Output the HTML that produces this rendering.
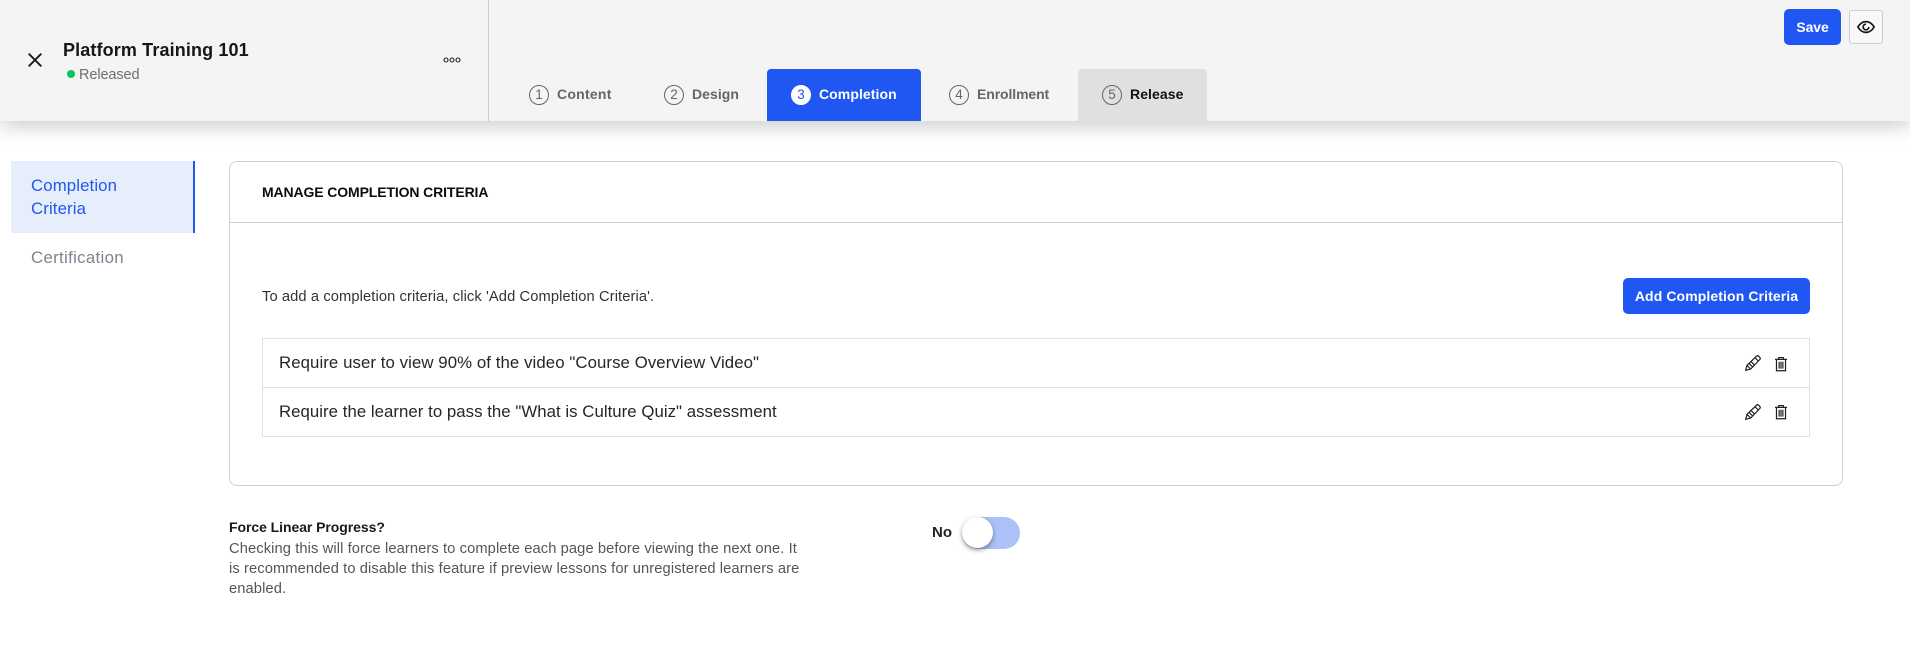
<!DOCTYPE html>
<html><head><meta charset="utf-8">
<style>
html,body{margin:0;padding:0;background:#fff}
body{width:1910px;height:656px;position:relative;overflow:hidden;font-family:"Liberation Sans",sans-serif;color:#222}
.a{position:absolute;white-space:nowrap;line-height:20px}
.b{font-weight:700}
.box{position:absolute;box-sizing:border-box}
svg{position:absolute;overflow:visible}
.tab{font-size:14px;font-weight:700;color:#666;top:84px}
.num{position:absolute;width:20px;height:20px;box-sizing:border-box;border:1.7px solid #666;border-radius:50%;top:85px;font-size:13.5px;line-height:17px;text-align:center;color:#666}
</style></head><body>
<div class="box" style="left:0;top:0;width:1910px;height:121px;background:#f4f4f4;box-shadow:0 4px 20px rgba(0,0,0,.22)"></div>
<div class="box" style="left:488px;top:0;width:1px;height:121px;background:#ccc"></div>
<svg style="left:28px;top:53px" width="14" height="14" viewBox="0 0 14 14"><path d="M.7.7l12.6 12.6M13.3.7L.7 13.3" stroke="#1a1a1a" stroke-width="1.9" fill="none"/></svg>
<div class="a b" style="left:63px;top:40px;font-size:18px;color:#161616;letter-spacing:.13px">Platform Training 101</div>
<div class="box" style="left:67px;top:70px;width:8px;height:8px;border-radius:50%;background:#0fc35c"></div>
<div class="a" style="left:79px;top:65px;font-size:14.5px;color:#6f6f6f;letter-spacing:-.1px">Released</div>
<svg style="left:443px;top:57px" width="18" height="6" viewBox="0 0 18 6" fill="none" stroke="#222" stroke-width="1.1"><circle cx="3" cy="3" r="2"/><circle cx="9" cy="3" r="2"/><circle cx="15" cy="3" r="2"/></svg>

<div class="box" style="left:767px;top:69px;width:154px;height:52px;background:#2057f3;border-radius:4px 4px 0 0"></div>
<div class="box" style="left:1078px;top:69px;width:129px;height:52px;background:#e0e0e0;border-radius:4px 4px 0 0"></div>
<div class="num" style="left:529px">1</div><div class="a tab" style="left:557px;letter-spacing:.25px">Content</div>
<div class="num" style="left:664px">2</div><div class="a tab" style="left:692px;letter-spacing:.05px">Design</div>
<div class="num" style="left:791px;background:#fff;border-color:#fff;color:#2057f3">3</div><div class="a tab" style="left:819px;color:#fff;letter-spacing:.07px">Completion</div>
<div class="num" style="left:949px">4</div><div class="a tab" style="left:977px;letter-spacing:-.1px">Enrollment</div>
<div class="num" style="left:1102px">5</div><div class="a tab" style="left:1130px;color:#111;letter-spacing:.08px">Release</div>

<div class="box" style="left:1784px;top:9px;width:57px;height:36px;background:#2057f3;border-radius:5px"></div>
<div class="a b" style="left:1784px;top:17px;width:57px;text-align:center;font-size:14px;color:#fff;letter-spacing:-.1px">Save</div>
<div class="box" style="left:1849px;top:10px;width:34px;height:34px;background:#f8f8f8;border:1px solid #ccc;border-radius:3px"></div>
<svg style="left:1857px;top:18px" width="18" height="18" viewBox="0 0 18 18" fill="none" stroke="#161616" stroke-width="1.7"><path d="M.9 9C3 5.4 5.8 3.6 9 3.6S15 5.4 17.1 9C15 12.6 12.200 14.400 9 14.400S3 12.600.9 9z"/><path d="M11.800 9A2.800 2.800 0 1 1 9 6.200" /></svg>

<div class="box" style="left:11px;top:161px;width:184px;height:72px;background:#e7eefb;border-right:2px solid #2057f3"></div>
<div class="a" style="left:31px;top:174px;font-size:16.8px;line-height:23px;color:#2057f3;letter-spacing:.12px;white-space:normal;width:130px">Completion<br>Criteria</div>
<div class="a" style="left:31px;top:248px;font-size:16.8px;color:#7b8590;letter-spacing:.33px">Certification</div>

<div class="box" style="left:229px;top:161px;width:1614px;height:325px;border:1px solid #cdd1d9;border-radius:8px"></div>
<div class="box" style="left:229px;top:222px;width:1614px;height:1px;background:#cdd1d9"></div>
<div class="a b" style="left:262px;top:182px;font-size:14px;color:#0c0c0c;letter-spacing:-.12px">MANAGE COMPLETION CRITERIA</div>
<div class="a" style="left:262px;top:287px;font-size:14.7px;color:#333;letter-spacing:.1px">To add a completion criteria, click 'Add Completion Criteria'.</div>
<div class="box" style="left:1623px;top:278px;width:187px;height:36px;background:#2057f3;border-radius:5px"></div>
<div class="a b" style="left:1623px;top:286px;width:187px;text-align:center;font-size:14px;color:#fff;letter-spacing:.1px">Add Completion Criteria</div>

<div class="box" style="left:262px;top:338px;width:1548px;height:99px;border:1px solid #e2e2e2"></div>
<div class="box" style="left:262px;top:387px;width:1548px;height:1px;background:#e2e2e2"></div>
<div class="a" style="left:279px;top:353px;font-size:16.8px;color:#262626;letter-spacing:.08px">Require user to view 90% of the video "Course Overview Video"</div>
<div class="a" style="left:279px;top:402px;font-size:16.8px;color:#262626;letter-spacing:.04px">Require the learner to pass the "What is Culture Quiz" assessment</div>

<svg style="left:1745px;top:355px" width="16" height="16" viewBox="0 0 16 16" fill="none" stroke="#1c1f25" stroke-width="1.200"><path d="M.7 15.300l1.300-5L11.500 1.200a1.500 1.500 0 0 1 2.100 0l1.200 1.200a1.500 1.500 0 0 1 0 2.100L5.700 14zM2 10.300L5.700 14M4 8.300l3.700 3.700M6 6.500l3.700 3.700M10 2.700l3.300 3.300"/></svg>
<svg style="left:1775px;top:356px" width="12" height="16" viewBox="0 0 13 16" fill="none" stroke="#1c1f25" stroke-width="1.300"><path d="M0 3h13M4 3V1h5v2M1.600 3v12.300h9.800V3M4.500 5.500v7.500M6.500 5.500v7.500M8.500 5.500v7.500"/></svg>
<svg style="left:1745px;top:404px" width="16" height="16" viewBox="0 0 16 16" fill="none" stroke="#1c1f25" stroke-width="1.200"><path d="M.7 15.300l1.300-5L11.500 1.200a1.500 1.500 0 0 1 2.100 0l1.200 1.200a1.500 1.500 0 0 1 0 2.100L5.700 14zM2 10.300L5.700 14M4 8.300l3.700 3.700M6 6.500l3.700 3.700M10 2.700l3.300 3.300"/></svg>
<svg style="left:1775px;top:404px" width="12" height="16" viewBox="0 0 13 16" fill="none" stroke="#1c1f25" stroke-width="1.300"><path d="M0 3h13M4 3V1h5v2M1.600 3v12.300h9.800V3M4.500 5.500v7.500M6.500 5.500v7.500M8.500 5.500v7.500"/></svg>

<div class="a b" style="left:229px;top:517px;font-size:14px;color:#1a1a1a;letter-spacing:-.06px">Force Linear Progress?</div>
<div class="a" style="left:229px;top:539px;font-size:14.7px;line-height:20px;color:#555;letter-spacing:.1px">Checking this will force learners to complete each page before viewing the next one. It<br>is recommended to disable this feature if preview lessons for unregistered learners are<br>enabled.</div>

<div class="a b" style="left:932px;top:523px;font-size:15px;color:#222">No</div>
<div class="box" style="left:962px;top:517px;width:58px;height:32px;border-radius:16px;background:#abc1f8"></div>
<div class="box" style="left:962px;top:517px;width:31px;height:31px;border-radius:50%;background:#fff;box-shadow:0 2px 5px rgba(0,0,0,.4)"></div>
</body></html>
